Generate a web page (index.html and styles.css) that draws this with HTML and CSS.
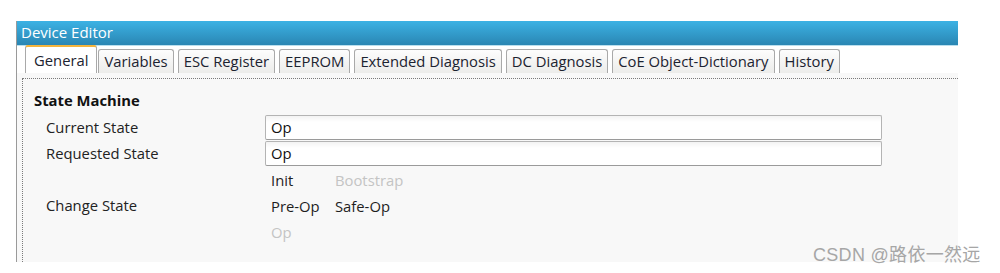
FILE: index.html
```html
<!DOCTYPE html>
<html lang="en">
<head>
	<meta charset="UTF-8">
	<title>Device Editor</title>
	<link rel="stylesheet" href="styles.css">
</head>
<body>
	<div id="window">
		<div class="titlebar">Device Editor</div>
		<ul id="tabs">
			<li class="selected">General</li>
			<li>Variables</li>
			<li>ESC Register</li>
			<li>EEPROM</li>
			<li>Extended Diagnosis</li>
			<li>DC Diagnosis</li>
			<li>CoE Object-Dictionary</li>
			<li>History</li>
		</ul>
		<div id="panel">
			<div class="inner">
				<h3>State Machine</h3>
				<div class="form">
					<span class="label">Current State</span>
					<div class="field">Op</div>
					<span class="label">Requested State</span>
					<div class="field">Op</div>
					<span class="label"></span>
					<div class="states">
						<span>Init</span>
						<span class="off">Bootstrap</span>
					</div>
					<span class="label">Change State</span>
					<div class="states">
						<span>Pre-Op</span>
						<span>Safe-Op</span>
					</div>
					<span class="label"></span>
					<div class="states">
						<span class="off">Op</span>
					</div>
				</div>
			</div>
		</div>
	</div>
	<div class="mark">CSDN @路依一然远</div>
</body>
</html>
```

FILE: styles.css
```css
*{
	margin: 0;
	padding: 0;
}
ul, ol{
	list-style: none;
}
body{
	background: #fff;
	font-family: "Open Sans", "Noto Sans CJK SC", sans-serif;
	font-size: 14.8px;
	color: #1e1e1e;
	position: relative;
	height: 273px;
	overflow: hidden;
}
#window{
	width: 941px;
	height: 241px;
	margin: 21px 0 0 16px;
	border-left: 1px solid #9a9a9a;
	display: flex;
	flex-direction: column;
}
.titlebar{
	height: 24px;
	line-height: 23px;
	padding-left: 4px;
	font-size: 15px;
	color: #fff;
	background: linear-gradient(#3cb2e4, #2a86b3);
	border-bottom: 1px solid #b9dfee;
}
#tabs{
	display: flex;
	align-items: flex-end;
	gap: 4px;
	height: 27px;
	padding-left: 8px;
	background: #fff;
}
#tabs li{
	height: 24px;
	line-height: 23px;
	padding: 0 5px;
	border: 1px solid #a9a9a9;
	border-bottom: none;
	border-radius: 3px 3px 0 0;
	background: linear-gradient(#fdfdfd, #ececea);
	color: #1c2330;
	box-sizing: border-box;
}
#tabs li.selected{
	height: 28px;
	line-height: 27px;
	padding: 0 8px;
	margin-right: -3px;
	border-top: 2px solid #f4b43c;
	background: #fff;
}
#panel{
	flex: 1;
	background: #f8f8f8;
	padding: 5px 0 0 5px;
	display: flex;
}
.inner{
	flex: 1;
	border-top: 1px dotted #7a7a7a;
	border-left: 1px dotted #7a7a7a;
	padding: 11px 0 0 11px;
}
h3{
	font-size: 14.8px;
	font-weight: bold;
	line-height: 20px;
	color: #111;
}
.form{
	display: grid;
	grid-template-columns: 219px 617px;
	grid-auto-rows: 26px;
	margin-top: 5px;
	padding-left: 12px;
}
.label{
	line-height: 25px;
	color: #222;
}
.field{
	height: 25px;
	line-height: 22px;
	padding-left: 5px;
	background: linear-gradient(#f3f3f3, #fff 6px);
	border: 1px solid #b4b4b4;
	border-bottom-color: #9a9a9a;
	border-radius: 2px;
	box-sizing: border-box;
	color: #111;
}
.states{
	display: flex;
	line-height: 26px;
	padding-left: 6px;
}
.states span{
	width: 64px;
}
.states .off{
	color: #c4c4c4;
}
.mark{
	position: absolute;
	left: 813px;
	top: 240px;
	font-family: "Liberation Sans", "Noto Sans CJK SC", sans-serif;
	font-size: 18px;
	color: #a6a6a6;
	letter-spacing: 0.3px;
}
```
